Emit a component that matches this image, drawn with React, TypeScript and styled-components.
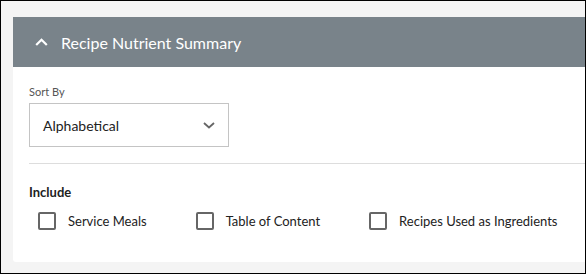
import styled, { createGlobalStyle } from 'styled-components'

const GlobalStyle = createGlobalStyle`
    * {
        box-sizing: border-box;
    }
    body {
        margin: 0;
        font-family: Lato, "Open Sans", sans-serif;
    }
`

const options = ['Service Meals', 'Table of Content', 'Recipes Used as Ingredients']

const App = () => {
  return (
    <Frame>
        <GlobalStyle />
        <Panel>
            <Header>
                <svg width="13" height="8" viewBox="0 0 13 8" fill="none">
                    <path d="M1.2 7L6.5 1.8L11.8 7" stroke="#fff" strokeWidth="2.2" />
                </svg>
                <HTxt>Recipe Nutrient Summary</HTxt>
            </Header>
            <Body>
                <Label>Sort By</Label>
                <Select>
                    <SelectTxt>Alphabetical</SelectTxt>
                    <svg width="12" height="7" viewBox="0 0 12 7" fill="none">
                        <path d="M1 1L6 5.5L11 1" stroke="#666" strokeWidth="1.8" />
                    </svg>
                </Select>
                <Divider />
                <SecTitle>Include</SecTitle>
                <CheckRow>
                    {options.map((o) => (
                        <CheckItem key={o}>
                            <Box />
                            <CheckTxt>{o}</CheckTxt>
                        </CheckItem>
                    ))}
                </CheckRow>
            </Body>
        </Panel>
    </Frame>
  )
}

export default App

const Frame = styled.div`
    width: 586px;
    height: 274px;
    border: 1px solid #000;
    background-color: #f4f4f4;
    padding: 16px 0 0 12px;
`

const Panel = styled.div`
    background-color: #fff;
    border-radius: 0 0 0 3px;
    height: 245px;
`

const Header = styled.div`
    height: 50px;
    background-color: #79838a;
    display: flex;
    align-items: center;
    padding-left: 22px;
    gap: 13px;
`

const HTxt = styled.h2`
    margin: 0;
    color: #fff;
    font-size: 16px;
    font-weight: 400;
`

const Body = styled.div`
    padding: 18px 0 0 16px;
`

const Label = styled.div`
    font-size: 11px;
    line-height: 14px;
    color: #555;
    margin-bottom: 4px;
`

const Select = styled.div`
    width: 200px;
    height: 44px;
    border: 1px solid #c4c4c4;
    display: flex;
    align-items: center;
    justify-content: space-between;
    padding: 0 13px 0 13px;
`

const SelectTxt = styled.span`
    font-size: 14px;
    color: #222;
`

const Divider = styled.div`
    height: 1px;
    background-color: #ddd;
    margin-top: 16px;
`

const SecTitle = styled.div`
    font-size: 13px;
    font-weight: 700;
    color: #222;
    margin-top: 20px;
    line-height: 16px;
`

const CheckRow = styled.div`
    display: flex;
    gap: 49px;
    padding-left: 9px;
    margin-top: 12px;
`

const CheckItem = styled.label`
    display: flex;
    align-items: center;
    gap: 12px;
`

const Box = styled.span`
    width: 18px;
    height: 18px;
    border: 2px solid #666;
    border-radius: 2px;
`

const CheckTxt = styled.span`
    font-size: 13px;
    color: #222;
`
